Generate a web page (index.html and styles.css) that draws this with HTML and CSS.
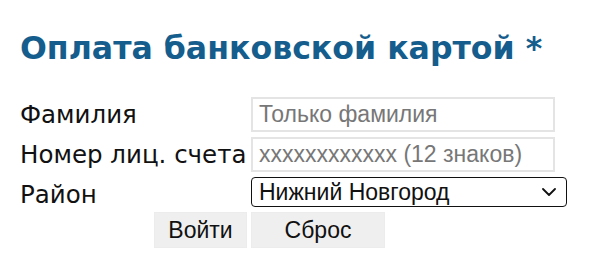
FILE: index.html
```html
<!DOCTYPE html>
<html lang="ru">
<head>
<meta charset="utf-8">
<title>Оплата банковской картой</title>
<link rel="stylesheet" href="styles.css">
</head>
<body>
<div class="page">
  <h1 class="title">Оплата банковской картой *</h1>
  <form class="form">
    <label class="label" for="fam">Фамилия</label>
    <input class="field" id="fam" type="text" placeholder="Только фамилия">
    <label class="label" for="acc">Номер лиц. счета</label>
    <input class="field" id="acc" type="text" placeholder="xxxxxxxxxxxx (12 знаков)">
    <label class="label" for="reg">Район</label>
    <div class="select" id="reg">
      <span class="select-text">Нижний Новгород</span>
      <svg class="chevron" width="14" height="8" viewBox="0 0 14 8"><path d="M1 1 L7 7 L13 1" fill="none" stroke="#111" stroke-width="1.8" stroke-linecap="round" stroke-linejoin="round"/></svg>
    </div>
    <div class="btn-cell-left"><button class="btn btn-login" type="button">Войти</button></div>
    <div class="btn-cell-right"><button class="btn btn-reset" type="button">Сброс</button></div>
  </form>
</div>
</body>
</html>
```
FILE: styles.css
```css
html, body {
  margin: 0;
  padding: 0;
  background: #fff;
}
.page {
  padding: 28px 0 0 20px;
}
.title {
  margin: 0 0 29px 0;
  font-family: "DejaVu Sans", Verdana, sans-serif;
  font-weight: bold;
  font-size: 31.6px;
  line-height: 40px;
  color: #145d8c;
  white-space: nowrap;
}
.form {
  display: grid;
  grid-template-columns: 231px 316px;
  grid-template-rows: 35px 35px 30px 36px;
  row-gap: 5px;
  align-items: start;
}
.label {
  font-family: "DejaVu Sans", Verdana, sans-serif;
  font-size: 24.5px;
  line-height: 35px;
  height: 35px;
  color: #111;
  white-space: nowrap;
}
.field {
  box-sizing: border-box;
  width: 304px;
  height: 35px;
  margin: 0;
  border: 2px solid #e4e4e4;
  padding: 0 6px;
  font-family: "Liberation Sans", Arial, sans-serif;
  font-size: 23px;
  color: #222;
  outline: none;
}
.field::placeholder {
  color: #777;
}
.select {
  box-sizing: border-box;
  width: 316px;
  height: 30px;
  border: 1.5px solid #111;
  border-radius: 4px;
  display: flex;
  align-items: center;
  justify-content: space-between;
  padding: 0 10px 0 7px;
  font-family: "Liberation Sans", Arial, sans-serif;
  font-size: 23px;
  color: #111;
}
.btn-cell-left {
  display: flex;
  justify-content: flex-end;
  padding-right: 4px;
}
.btn {
  box-sizing: border-box;
  height: 36px;
  margin: 0;
  border: 1px solid #ececec;
  background: #efefef;
  font-family: "Liberation Sans", Arial, sans-serif;
  font-size: 23px;
  color: #111;
  padding: 0;
}
.btn-login {
  width: 93px;
}
.btn-reset {
  width: 134px;
}
```
